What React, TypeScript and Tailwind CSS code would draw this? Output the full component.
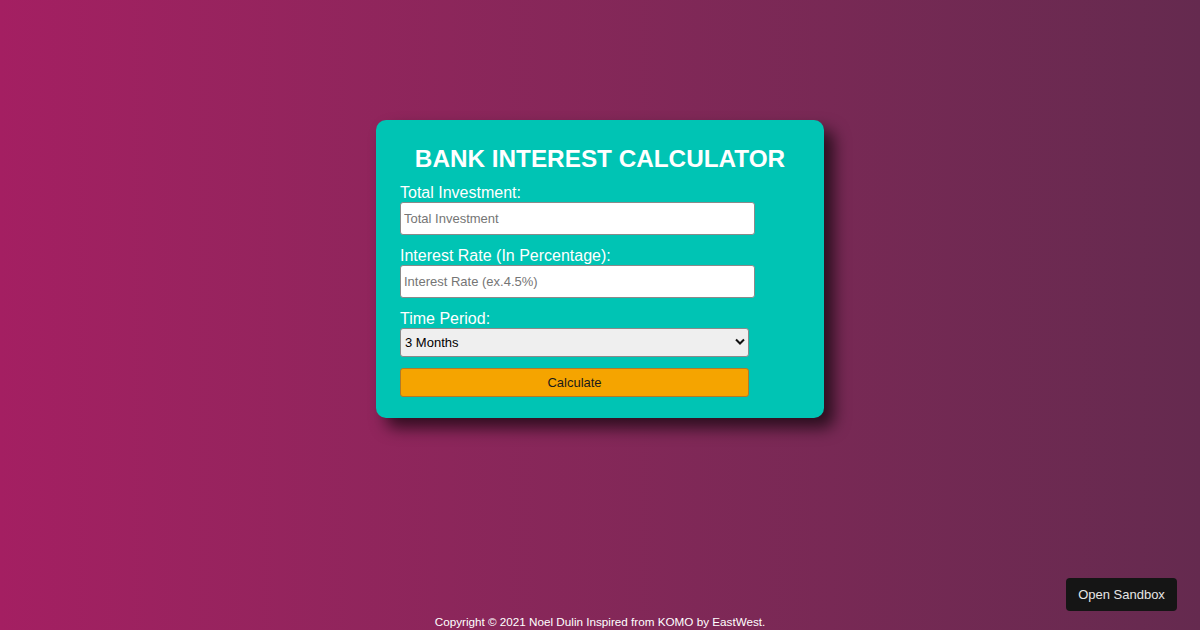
import React, { useState } from 'react';

const App: React.FC = () => {
  const [investment, setInvestment] = useState('');
  const [rate, setRate] = useState('');
  const [period, setPeriod] = useState('3');

  return (
    <div className="relative flex h-[630px] w-full flex-col items-center bg-gradient-to-r from-[#a41f62] to-[#652a4f] font-['Liberation_Sans',Arial,sans-serif] text-white">
      <div className="mt-[120px] flex h-[298px] w-[448px] flex-col rounded-[10px] bg-[#00c4b4] px-6 pt-[25px] shadow-[10px_10px_16px_rgba(0,0,0,0.65)]">
        <h1 className="text-center text-[24.3px] leading-[28px] font-bold">BANK INTEREST CALCULATOR</h1>
        <form className="mt-[11px] flex w-[356px] flex-col" onSubmit={(e) => e.preventDefault()}>
          <label className="text-[16px] leading-[18px]">Total Investment:</label>
          <input
            value={investment}
            onChange={(e) => setInvestment(e.target.value)}
            placeholder="Total Investment"
            className="mt-0 h-[33px] w-[355px] rounded-[3px] border border-[#8a8a8a] bg-white px-[3px] text-[13px] text-black placeholder:text-[#757575]"
          />
          <label className="mt-[12px] text-[16px] leading-[18px]">Interest Rate (In Percentage):</label>
          <input
            value={rate}
            onChange={(e) => setRate(e.target.value)}
            placeholder="Interest Rate (ex.4.5%)"
            className="mt-0 h-[33px] w-[355px] rounded-[3px] border border-[#8a8a8a] bg-white px-[3px] text-[13px] text-black placeholder:text-[#757575]"
          />
          <label className="mt-[12px] text-[16px] leading-[18px]">Time Period:</label>
          <div className="relative mt-0 h-[29px] w-[349px]">
            <select
              value={period}
              onChange={(e) => setPeriod(e.target.value)}
              className="h-full w-full appearance-none rounded-[3px] border border-[#8a8a8a] bg-[#efefef] pl-[4px] text-[13px] text-black"
            >
              <option value="3">3 Months</option>
              <option value="6">6 Months</option>
              <option value="12">1 Year</option>
            </select>
            <svg className="pointer-events-none absolute right-[4px] top-[10px]" width="10" height="8" viewBox="0 0 10 8">
              <path d="M1 1.5 L5 5.5 L9 1.5" fill="none" stroke="#111" strokeWidth="2" />
            </svg>
          </div>
          <button
            type="submit"
            className="mt-[11px] h-[29px] w-[349px] rounded-[3px] border border-[#b07a2a] bg-[#f5a400] text-[13px] text-[#1a1a1a]"
          >
            Calculate
          </button>
        </form>
      </div>
      <p className="mt-auto mb-[1px] text-[11.7px] leading-[14px]">
        Copyright © 2021 Noel Dulin Inspired from KOMO by EastWest.
      </p>
      <button className="absolute right-[23px] bottom-[19px] h-[33px] w-[111px] rounded-[4px] bg-[#151515] text-[13px] text-[#e6e6e6]">
        Open Sandbox
      </button>
    </div>
  );
};

export default App;
